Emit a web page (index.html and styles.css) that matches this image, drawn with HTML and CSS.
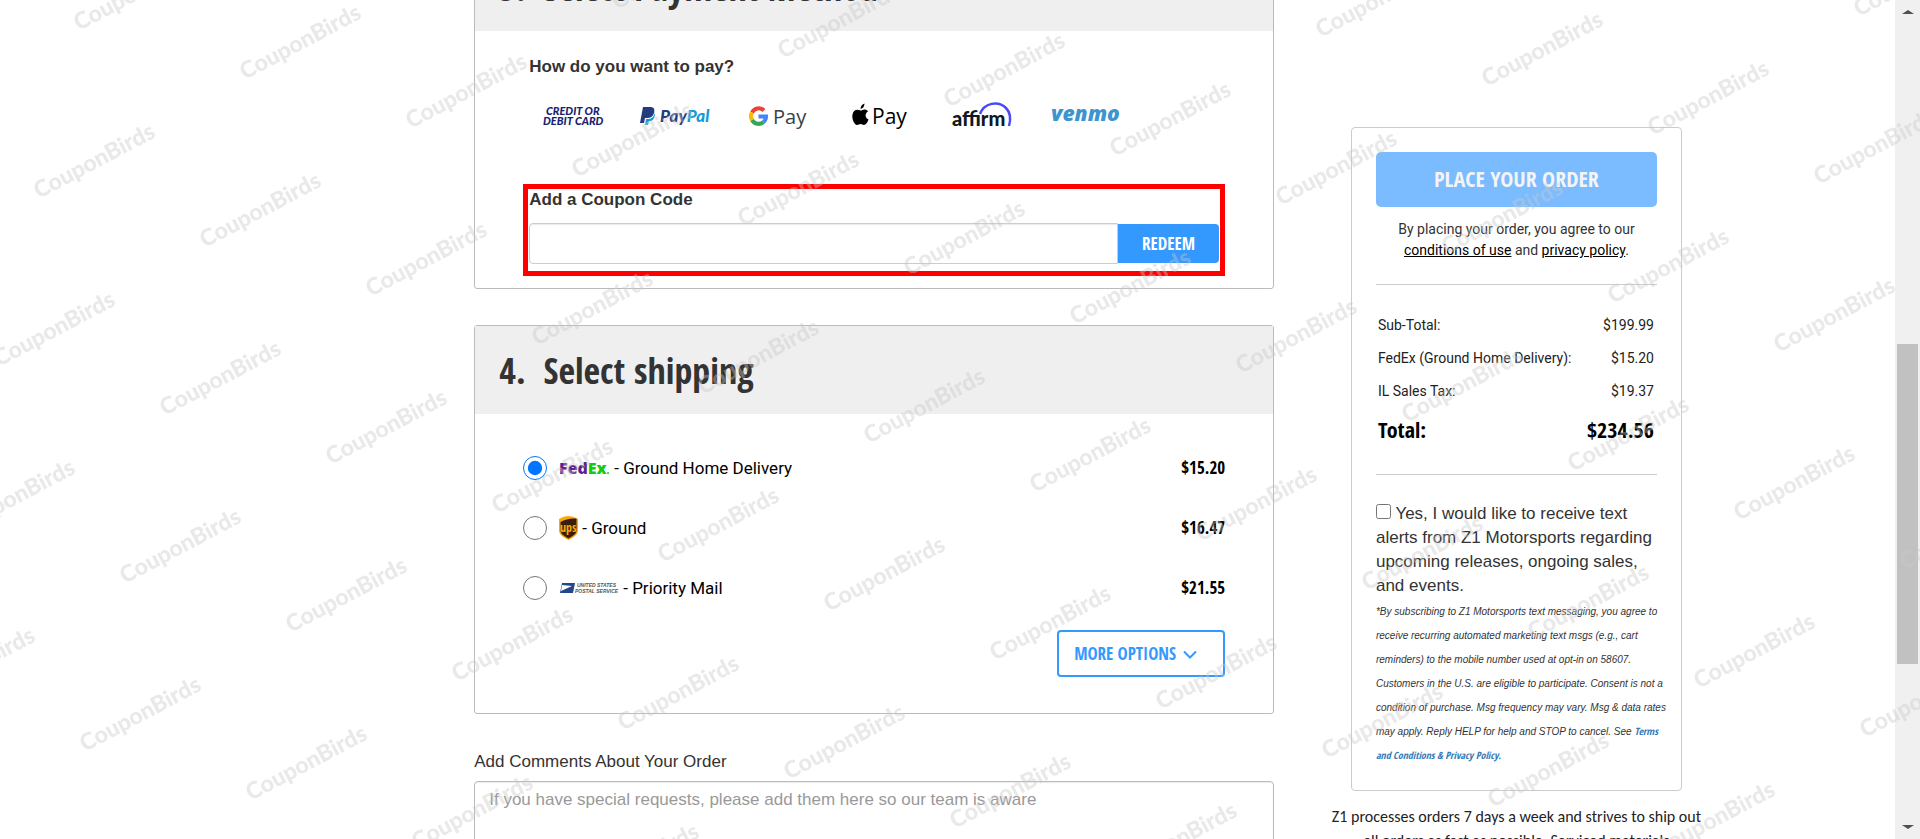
FILE: index.html
```
<!DOCTYPE html>
<html lang="en">
<head>
    <meta charset="UTF-8">
    <meta name="viewport" content="width=device-width, initial-scale=1.0">
    <title>Checkout</title>
    <link rel="stylesheet" href="styles.css">
</head>
<body>
    <div class="page">
        <main class="checkout">
            <section class="panel">
                <h2 class="panel-title"><span>3.</span> Select Payment Method</h2>
                <div class="payment">
                    <h3 class="label">How do you want to pay?</h3>
                    <div class="methods">
                        <svg class="logo" width="61" height="28" viewBox="0 0 61 28" role="img" aria-label="Credit or debit card">
                            <g font-family="Lato" font-weight="900" font-style="italic" font-size="11" fill="#1a1f71">
                                <text x="3" y="13">CREDIT OR</text>
                                <text x="0" y="23">DEBIT CARD</text>
                            </g>
                        </svg>
                        <svg class="logo" width="72" height="28" viewBox="0 0 72 28" role="img" aria-label="PayPal">
                            <path d="M3 5h7c4 0 5 2 4 6-1 4-4 5-7 5H5l-1 5H0z" fill="#253b80"/>
                            <path d="M14 8c2 2 0 9-6 9H6l-1 6h3l1-4h2c4-1 5-9 3-11z" fill="#179bd7"/>
                            <text x="20" y="20" font-family="Lato" font-weight="900" font-style="italic" font-size="17" fill="#253b80">Pay<tspan fill="#179bd7">Pal</tspan></text>
                        </svg>
                        <svg class="logo" width="68" height="28" viewBox="0 0 68 28" role="img" aria-label="Google Pay">
                            <g fill="none" stroke-width="4">
                                <path d="M16 8.500A7.500 7.500 0 0 0 4 10.500" stroke="#ea4335"/>
                                <path d="M4 10.500A7.500 7.500 0 0 0 4 18" stroke="#fbbc04"/>
                                <path d="M4 18A7.500 7.500 0 0 0 15.500 20" stroke="#34a853"/>
                                <path d="M15.500 20A7.500 7.500 0 0 0 18 14.500H10.500" stroke="#4285f4"/>
                            </g>
                            <text x="25" y="22" font-family="Open Sans" font-weight="500" font-size="20" fill="#3c4043">Pay</text>
                        </svg>
                        <svg class="logo" width="64" height="28" viewBox="0 0 64 28" role="img" aria-label="Apple Pay">
                            <path d="M8.500 8.500c2 0 2.500-1.500 4.500-1 1.500 0 2.500 1 3 2-3.500 2-3 6.500.500 8-1 3-3 5.500-4.500 5.500-1.500 0-2-1-3.500-1s-2 1-3.500 1C2.500 23-.500 17 .500 12.500 1.500 7.500 5.500 7 8.500 8.500zM8.500 7c0-3 2-5 4-5.500 0 3-1.500 5-4 5.500z"/>
                            <text x="20" y="22" font-family="Open Sans" font-size="21">Pay</text>
                        </svg>
                        <svg class="logo" width="63" height="28" viewBox="0 0 63 28" role="img" aria-label="Affirm">
                            <path d="M28 12C32 1 46-2 54 6c4 4 5 11 3 18" fill="none" stroke="#4a4af4" stroke-width="2.500"/>
                            <text x="0" y="24" font-family="Lato" font-weight="900" font-size="20" fill="#101820">affirm</text>
                        </svg>
                        <svg class="logo" width="68" height="28" viewBox="0 0 68 28" role="img" aria-label="Venmo">
                            <text x="0" y="19" font-family="Open Sans" font-weight="800" font-style="italic" font-size="21" fill="#3d95ce">venmo</text>
                        </svg>
                    </div>
                    <form class="coupon">
                        <label class="label" for="coupon">Add a Coupon Code</label>
                        <div class="coupon-row">
                            <input type="text" id="coupon">
                            <button type="button" class="redeem">REDEEM</button>
                        </div>
                    </form>
                </div>
            </section>

            <section class="panel">
                <h2 class="panel-title"><span>4.</span> Select shipping</h2>
                <div class="shipping">
                    <div class="option">
                        <input type="radio" name="shipping" id="fedex" checked>
                        <label for="fedex">
                            <svg width="51" height="18" viewBox="0 0 51 18" role="img" aria-label="FedEx">
                                <text x="0" y="15" font-family="Open Sans" font-weight="800" font-size="16" fill="#5b1f8e">Fed<tspan fill="#1c1">Ex</tspan></text>
                                <circle cx="49" cy="14" r="1" fill="#1c1"/>
                            </svg>
                            - Ground Home Delivery
                        </label>
                        <span class="price">$15.20</span>
                    </div>
                    <div class="option">
                        <input type="radio" name="shipping" id="ups">
                        <label for="ups">
                            <svg width="19" height="24" viewBox="0 0 19 24" role="img" aria-label="UPS">
                                <path d="M0 3Q9-3 19 3v11c0 5-4 7-9.500 10C4 21 0 19 0 14z" fill="#f5a80f"/>
                                <path d="M1.500 6Q8 2 17.500 2.500V14c0 4-3 5.500-8 8.500-5-3-8-4.500-8-8.500z" fill="#3b1d0c"/>
                                <text x="1" y="16" font-family="Open Sans Condensed" font-weight="700" font-size="12" fill="#f5a80f">ups</text>
                            </svg>
                            - Ground
                        </label>
                        <span class="price">$16.47</span>
                    </div>
                    <div class="option">
                        <input type="radio" name="shipping" id="usps">
                        <label for="usps">
                            <svg width="60" height="14" viewBox="0 0 60 14" role="img" aria-label="United States Postal Service">
                                <path d="M3 2h13l-2 10H1z" fill="#21468b"/>
                                <path d="M3 4l10 1-11 5z" fill="#fff"/>
                                <g font-family="Liberation Sans" font-weight="700" font-style="italic" font-size="5" fill="#555">
                                    <text x="18" y="6">UNITED STATES</text>
                                    <text x="16" y="12">POSTAL SERVICE</text>
                                </g>
                            </svg>
                            - Priority Mail
                        </label>
                        <span class="price">$21.55</span>
                    </div>
                    <button type="button" class="more">MORE OPTIONS
                        <svg width="14" height="10" viewBox="0 0 14 10" aria-hidden="true"><path d="M1 1.500l6 6 6-6" fill="none" stroke="currentColor" stroke-width="2"/></svg>
                    </button>
                </div>
            </section>

            <div class="comments">
                <label for="comments">Add Comments About Your Order</label>
                <textarea id="comments" rows="4" placeholder="If you have special requests, please add them here so our team is aware"></textarea>
            </div>
        </main>

        <aside class="sidebar">
            <div class="summary">
                <button type="button" class="place-order">PLACE YOUR ORDER</button>
                <p class="terms">By placing your order, you agree to our <a href="#">conditions of use</a> and <a href="#">privacy policy</a>.</p>
                <table class="totals">
                    <tr><td>Sub-Total:</td><td>$199.99</td></tr>
                    <tr><td>FedEx (Ground Home Delivery):</td><td>$15.20</td></tr>
                    <tr><td>IL Sales Tax:</td><td>$19.37</td></tr>
                    <tr class="total"><td>Total:</td><td>$234.56</td></tr>
                </table>
                <div class="alerts">
                    <input type="checkbox" id="alerts">
                    <label for="alerts">Yes, I would like to receive text alerts from Z1 Motorsports regarding upcoming releases, ongoing sales, and events.</label>
                    <p class="legal">
                        *By subscribing to Z1 Motorsports text messaging, you agree to<br>
                        receive recurring automated marketing text msgs (e.g., cart<br>
                        reminders) to the mobile number used at opt-in on 58607.<br>
                        Customers in the U.S. are eligible to participate. Consent is not a<br>
                        condition of purchase. Msg frequency may vary. Msg &amp; data rates<br>
                        may apply. Reply HELP for help and STOP to cancel. See <a href="#">Terms<br>
                        and Conditions &amp; Privacy Policy.</a>
                    </p>
                </div>
            </div>
            <p class="note">Z1 processes orders 7 days a week and strives to ship out<br>all orders as fast as possible. Serviced materials</p>
        </aside>
    </div>

    <div class="scrollbar" aria-hidden="true">
        <svg width="12" height="4" viewBox="0 0 12 4"><path d="M0 4l6-4 6 4z" fill="#505050"/></svg>
        <div class="track"><div class="thumb"></div></div>
        <svg width="12" height="4" viewBox="0 0 12 4"><path d="M0 0l6 4 6-4z" fill="#505050"/></svg>
    </div>

    <svg class="watermark" id="watermark" aria-hidden="true"></svg>

    <script>
        const watermark = document.getElementById('watermark');

        // Repeat the mark on a slanted grid until the window is covered
        for (let row = -4; row < 12; row++) {
            for (let col = -4; col < 16; col++) {
                const x = 39 + col * 166 - row * 40;
                const y = 199 + col * 49 + row * 168;
                if (x < -160 || x > innerWidth || y < 0 || y > innerHeight + 100) continue;
                const mark = document.createElementNS('http://www.w3.org/2000/svg', 'text');
                mark.setAttribute('transform', `translate(${x} ${y}) rotate(-28)`);
                mark.textContent = 'CouponBirds';
                watermark.appendChild(mark);
            }
        }
    </script>
</body>
</html>
```
FILE: styles.css
```
* {
    box-sizing: border-box;
}

body {
    margin: 0;
    height: 100vh;
    overflow: hidden;
    display: flex;
    background: #fff;
    color: #333;
    font-family: "Liberation Sans", Arial, sans-serif;
    font-size: 17px;
    line-height: 24px;
}

h2, h3, p {
    margin: 0;
}

.page {
    flex: 1;
    display: flex;
    align-items: flex-start;
    gap: 4%;
    padding-left: 24.7%;
    overflow: hidden;
}

.checkout {
    width: 56.3%;
    margin-top: -58px;
}

.panel {
    margin-bottom: 36px;
    border: 1px solid #bbb;
    border-radius: 3px;
}

.panel-title {
    height: 88px;
    padding: 0 24px;
    background: #efefef;
    font-family: "Open Sans Condensed", "Liberation Sans Narrow", sans-serif;
    font-size: 36px;
    line-height: 90px;
}

.panel-title span {
    margin-right: 9px;
}

.label {
    display: block;
    font-size: 17px;
    font-weight: bold;
    line-height: 22px;
}

.payment {
    padding: 25px 48px 12px;
}

.payment > .label {
    padding-left: 6px;
}

.methods {
    display: flex;
    align-items: center;
    gap: 36px;
    padding: 24px 20px 54px;
}

.logo {
    flex: none;
    overflow: visible;
}

.coupon {
    border: 5px solid #f00;
    padding: 0 1px 7px;
}

.coupon-row {
    display: flex;
    align-items: center;
    margin-top: 12px;
}

.coupon-row input {
    flex: 1;
    height: 41px;
    padding: 0 12px;
    border: 1px solid #ccc;
    border-radius: 4px 0 0 4px;
    box-shadow: inset 0 1px 1px rgba(0, 0, 0, 0.08);
    font-size: 16px;
}

button {
    font-family: "Open Sans Condensed", "Liberation Sans Narrow", sans-serif;
    font-weight: bold;
    cursor: pointer;
}

.redeem {
    width: 101px;
    height: 39px;
    border: none;
    border-radius: 0 4px 4px 0;
    background: #39f;
    color: #fff;
    font-size: 17px;
}

.shipping {
    display: flex;
    flex-direction: column;
    padding: 24px 48px 36px;
    color: #000;
    font-family: Roboto, sans-serif;
}

.option {
    display: flex;
    align-items: center;
    gap: 12px;
    height: 60px;
}

.option input {
    width: 24px;
    height: 24px;
    margin: 0;
}

.option label {
    flex: 1;
    display: flex;
    align-items: center;
    gap: 4px;
}

.option svg {
    overflow: visible;
}

.price {
    font-family: "Open Sans Condensed", "Liberation Sans Narrow", sans-serif;
    font-weight: bold;
}

.more {
    align-self: flex-end;
    width: 168px;
    height: 47px;
    margin-top: 12px;
    padding: 0 15px;
    border: 2px solid #39f;
    border-radius: 4px;
    background: #fff;
    color: #39f;
    font-size: 17px;
    text-align: left;
}

.more svg {
    margin-left: 3px;
}

.comments textarea {
    display: block;
    width: 100%;
    margin-top: 7px;
    padding: 6px 14px;
    border: 1px solid #bbb;
    border-radius: 4px;
    box-shadow: inset 0 1px 1px rgba(0, 0, 0, 0.08);
    font: inherit;
    resize: none;
}

.comments textarea::placeholder {
    color: #999;
}

.sidebar {
    width: 371px;
    margin-top: 127px;
}

.summary {
    margin: 0 20px;
    padding: 24px 24px 22px;
    border: 1px solid #ccc;
    border-radius: 4px;
}

.place-order {
    width: 100%;
    height: 55px;
    padding: 0 0 3px;
    border: none;
    border-radius: 5px;
    background: #7abcff;
    color: #f4f4f4;
    font-size: 22px;
}

.terms {
    padding: 12px 10px 23px;
    border-bottom: 1px solid #ccc;
    font-family: Roboto, sans-serif;
    font-size: 14px;
    line-height: 21px;
    text-align: center;
}

.terms a {
    color: #000;
}

.totals {
    width: 100%;
    margin: 23px 0 24px;
    border-collapse: collapse;
    color: #222;
    font-family: Roboto, sans-serif;
    font-size: 14px;
}

.totals td {
    height: 33px;
    padding: 0 3px 0 2px;
}

.totals td:last-child {
    text-align: right;
}

.totals .total td {
    height: 43px;
    color: #000;
    font-family: "Open Sans Condensed", "Liberation Sans Narrow", sans-serif;
    font-size: 22px;
    font-weight: bold;
}

.alerts {
    border-top: 1px solid #ccc;
    padding-top: 27px;
}

.alerts input {
    width: 15px;
    height: 15px;
    margin: 0;
}

.legal {
    margin-top: 2px;
    font-size: 10px;
    font-style: italic;
    line-height: 24px;
    white-space: nowrap;
}

.legal a {
    color: #337ab7;
    font-family: "Open Sans Condensed", "Liberation Sans Narrow", sans-serif;
    font-weight: bold;
    line-height: 1;
    text-decoration: none;
}

.note {
    margin-top: 14px;
    color: #222;
    font-family: Carlito, Lato, sans-serif;
    font-size: 16px;
    text-align: center;
    white-space: nowrap;
}

.scrollbar {
    display: flex;
    flex-direction: column;
    align-items: center;
    justify-content: space-between;
    width: 25px;
    padding: 10px 2px;
    background: #f0f0f0;
}

.track {
    flex: 1;
    width: 100%;
    display: flex;
    flex-direction: column;
    padding: 330px 0 161px;
}

.thumb {
    flex: 1;
    background: #c1c1c1;
}

/* lies over the whole window */
.watermark {
    position: fixed;
    top: 0;
    left: 0;
    width: 100%;
    height: 100%;
    pointer-events: none;
    fill: rgba(200, 200, 200, 0.4);
    font-family: Lato, sans-serif;
    font-size: 23px;
    font-weight: 900;
}
```
